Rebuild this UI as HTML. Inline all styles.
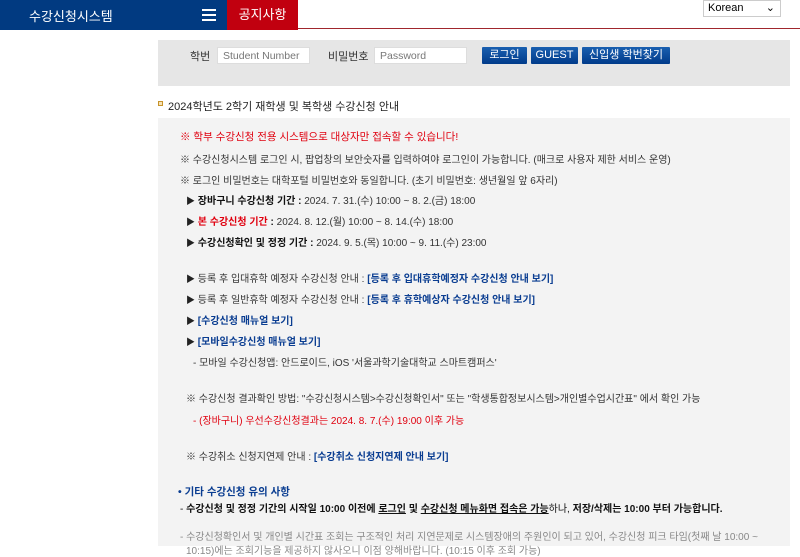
<!DOCTYPE html>
<html><head><meta charset="utf-8"><style>
*{margin:0;padding:0;box-sizing:border-box}
body{width:800px;height:546px;overflow:hidden;background:#fff;font-family:"Liberation Sans","Noto Sans CJK KR",sans-serif;font-size:11px;color:#333;position:relative}
.a{position:absolute;white-space:nowrap}
.nav{left:0;top:0;width:227px;height:30px;background:#013a81}
.tab{left:227px;top:0;width:71px;height:30px;background:#c1000f;color:#fff;font-size:13px;text-align:center;line-height:30px}
.line{left:298px;top:28px;width:502px;height:1px;background:#a0262d}
.logo{left:29px;top:6px;color:#fff;font-size:13px}
.hb{left:202px;top:9px;width:14px;height:2px;background:#fff;box-shadow:0 5px 0 #fff,0 10px 0 #fff}
.sel{left:703px;top:0;width:78px;height:17px;border:1px solid #ccc;background:#fff;font-size:11px;padding:1px 4px;color:#000}
.box{left:158px;top:40px;width:632px;height:46px;background:#e6e6e6}
.inp{height:17px;background:#fff;border:1px solid #ddd;color:#777;padding:2px 5px;font-size:10.5px}
.btn{height:17px;background:linear-gradient(#1a5fb0,#003b8a);color:#fff;font-size:11px;text-align:center;line-height:16px;border-radius:1px}
.cont{left:158px;top:118px;width:632px;height:428px;background:#f3f3f3}
.t{font-size:10px}
.r{color:#e0000f}.b{color:#0a3d91;font-weight:bold}.k{color:#111;font-weight:bold}
.tri{font-size:9px;color:#222}
</style></head><body>
<div class="a nav"></div><div class="a logo">수강신청시스템</div><div class="a hb"></div>
<div class="a tab">공지사항</div><div class="a line"></div>
<div class="a sel">Korean<span style="position:absolute;right:5px;top:0">⌄</span></div>
<div class="a box"></div>
<div class="a" style="left:190px;top:48px;font-size:11px">학번</div>
<div class="a inp" style="left:217px;top:47px;width:93px">Student Number</div>
<div class="a" style="left:328px;top:48px;font-size:11px">비밀번호</div>
<div class="a inp" style="left:374px;top:47px;width:93px">Password</div>
<div class="a btn" style="left:482px;top:47px;width:45px">로그인</div>
<div class="a btn" style="left:531px;top:47px;width:47px">GUEST</div>
<div class="a btn" style="left:582px;top:47px;width:88px">신입생 학번찾기</div>
<div class="a" style="left:158px;top:101px;width:5px;height:5px;border:1px solid #c7932a;background:#f6e2b5"></div>
<div class="a" style="left:168px;top:98px;font-size:11px;color:#222">2024학년도 2학기 재학생 및 복학생 수강신청 안내</div>
<div class="a cont"></div>
<div class="a t r" style="left:180px;top:129px;font-size:10.5px">※ 학부 수강신청 전용 시스템으로 대상자만 접속할 수 있습니다!</div>
<div class="a t" style="left:180px;top:151px">※ 수강신청시스템 로그인 시, 팝업창의 보안숫자를 입력하여야 로그인이 가능합니다. (매크로 사용자 제한 서비스 운영)</div>
<div class="a t" style="left:180px;top:172px">※ 로그인 비밀번호는 대학포털 비밀번호와 동일합니다. (초기 비밀번호: 생년월일 앞 6자리)</div>
<div class="a t" style="left:186px;top:192px"><span class="tri">▶</span> <b class="k">장바구니 수강신청 기간 :</b> 2024. 7. 31.(수) 10:00 ~ 8. 2.(금) 18:00</div>
<div class="a t" style="left:186px;top:213px"><span class="tri">▶</span> <b class="r">본 수강신청 기간</b> <b class="k">:</b> 2024. 8. 12.(월) 10:00 ~ 8. 14.(수) 18:00</div>
<div class="a t" style="left:186px;top:234px"><span class="tri">▶</span> <b class="k">수강신청확인 및 정정 기간 :</b> 2024. 9. 5.(목) 10:00 ~ 9. 11.(수) 23:00</div>
<div class="a t" style="left:186px;top:270px"><span class="tri">▶</span> 등록 후 입대휴학 예정자 수강신청 안내 : <span class="b">[등록 후 입대휴학예정자 수강신청 안내 보기]</span></div>
<div class="a t" style="left:186px;top:291px"><span class="tri">▶</span> 등록 후 일반휴학 예정자 수강신청 안내 : <span class="b">[등록 후 휴학예상자 수강신청 안내 보기]</span></div>
<div class="a t" style="left:186px;top:312px"><span class="tri">▶</span> <span class="b">[수강신청 매뉴얼 보기]</span></div>
<div class="a t" style="left:186px;top:333px"><span class="tri">▶</span> <span class="b">[모바일수강신청 매뉴얼 보기]</span></div>
<div class="a t" style="left:193px;top:354px">- 모바일 수강신청앱: 안드로이드, iOS '서울과학기술대학교 스마트캠퍼스'</div>
<div class="a t" style="left:186px;top:390px">※ 수강신청 결과확인 방법: "수강신청시스템&gt;수강신청확인서" 또는 "학생통합정보시스템&gt;개인별수업시간표" 에서 확인 가능</div>
<div class="a t r" style="left:193px;top:412px">- (장바구니) 우선수강신청결과는 2024. 8. 7.(수) 19:00 이후 가능</div>
<div class="a t" style="left:186px;top:448px">※ 수강취소 신청지연제 안내 : <span class="b">[수강취소 신청지연제 안내 보기]</span></div>
<div class="a t" style="left:178px;top:484px;color:#0a3d91;font-weight:bold;font-size:10.5px">• 기타 수강신청 유의 사항</div>
<div class="a t" style="left:180px;top:500px;color:#111">- <b>수강신청 및 정정 기간의 시작일 10:00 이전에 <u>로그인</u> 및 <u>수강신청 메뉴화면 접속은 가능</u></b>하나, <b>저장/삭제는 10:00 부터 가능합니다.</b></div>
<div class="a t" style="left:180px;top:528px;color:#888">- 수강신청확인서 및 개인별 시간표 조회는 구조적인 처리 지연문제로 시스템장애의 주원인이 되고 있어, 수강신청 피크 타임(첫째 날 10:00 ~</div>
<div class="a t" style="left:186px;top:542px;color:#888">10:15)에는 조회기능을 제공하지 않사오니 이점 양해바랍니다. (10:15 이후 조회 가능)</div>
</body></html>
